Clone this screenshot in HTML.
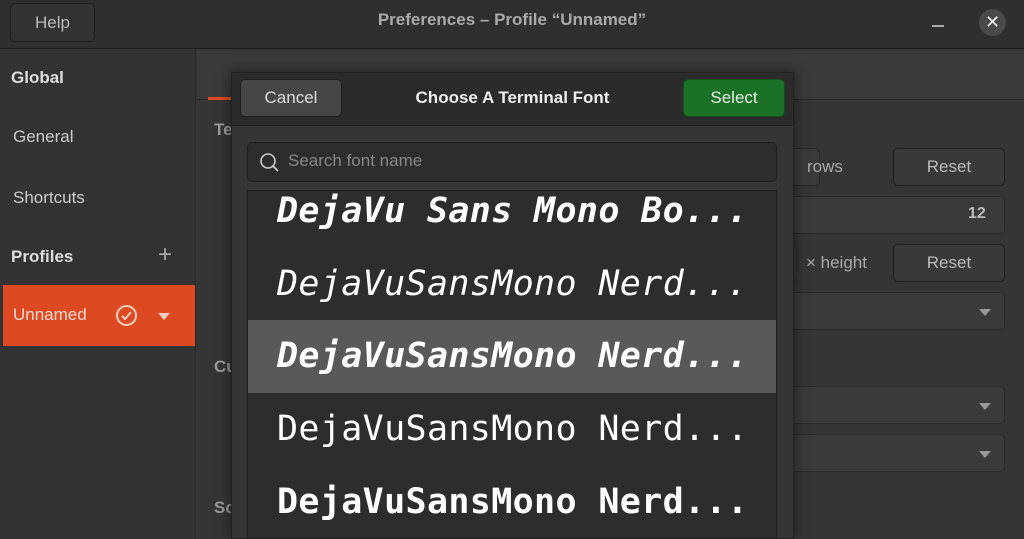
<!DOCTYPE html>
<html><head><meta charset="utf-8"><style>
*{box-sizing:border-box;margin:0;padding:0}
body{width:1024px;height:539px;overflow:hidden;background:#353535;font-family:"Liberation Sans","DejaVu Sans",sans-serif;color:#ddd;position:relative}
.abs{position:absolute}
.title{left:0;top:0;width:1024px;height:49px;background:#2f2f2f;border-bottom:1px solid #1e1e1e}
.btn{border:1px solid #1f1f1f;border-radius:5px;background:#393939;color:#bbb;font-size:17px;display:flex;align-items:center;justify-content:center}
.side{left:0;top:50px;width:196px;height:489px;background:#333;border-right:1px solid #2a2a2a}
.field{background:#3a3a3a;border:1px solid #2a2a2a;border-radius:5px}
.tri{width:0;height:0;border-left:6px solid transparent;border-right:6px solid transparent;border-top:7px solid #999}
.row{left:248px;width:528px;height:73px;font-family:"DejaVu Sans Mono",monospace;font-size:35px;letter-spacing:0.35px;color:#fff;padding-left:29px;line-height:73px;white-space:nowrap;overflow:hidden}
</style></head><body>
<div class="abs title"></div>
<div class="abs btn" style="left:10px;top:3px;width:85px;height:39px;background:#333">Help</div>
<div class="abs" style="left:0;width:1024px;top:10px;text-align:center;font-weight:bold;font-size:17px;color:#aaa">Preferences – Profile “Unnamed”</div>
<div class="abs" style="left:932px;top:25px;width:12px;height:2px;background:#aaa"></div>
<div class="abs" style="left:979px;top:9px;width:27px;height:27px;border-radius:50%;background:#4a4a4a;color:#eee;font-size:18px;text-align:center;line-height:27px">✕</div>
<div class="abs side"></div>
<div class="abs" style="left:11px;top:68px;font-weight:bold;font-size:17px;color:#ddd">Global</div>
<div class="abs" style="left:13px;top:127px;font-size:17px;color:#ccc">General</div>
<div class="abs" style="left:13px;top:188px;font-size:17px;color:#ccc">Shortcuts</div>
<div class="abs" style="left:11px;top:247px;font-weight:bold;font-size:17px;color:#ddd">Profiles</div>
<div class="abs" style="left:158px;top:241px;font-size:24px;color:#aaa">+</div>
<div class="abs" style="left:3px;top:285px;width:192px;height:61px;background:#dd4a22"></div>
<div class="abs" style="left:13px;top:305px;font-size:17px;color:#f2d8cf">Unnamed</div>
<div class="abs" style="left:116px;top:305px;width:21px;height:21px;border:2px solid #f0cdbf;border-radius:50%"></div>
<svg class="abs" style="left:116px;top:305px" width="21" height="21"><path d="M6 11l3 3 6-7" stroke="#f0cdbf" stroke-width="2" fill="none"/></svg>
<div class="abs tri" style="left:158px;top:313px;border-top-color:#f0cdbf"></div>
<div class="abs" style="left:197px;top:50px;width:827px;height:50px;background:#3a3a3a;border-bottom:1px solid #2a2a2a"></div>
<div class="abs" style="left:208px;top:97px;width:30px;height:3px;background:#dd4a22"></div>
<div class="abs" style="left:214px;top:120px;font-weight:bold;font-size:17px;color:#999">Te</div>
<div class="abs" style="left:214px;top:357px;font-weight:bold;font-size:17px;color:#999">Cu</div>
<div class="abs" style="left:214px;top:498px;font-weight:bold;font-size:17px;color:#999">Sc</div>
<div class="abs field" style="left:760px;top:148px;width:60px;height:38px"></div>
<div class="abs" style="left:807px;top:157px;font-size:17px;color:#aaa">rows</div>
<div class="abs btn" style="left:893px;top:148px;width:112px;height:38px">Reset</div>
<div class="abs field" style="left:760px;top:196px;width:245px;height:38px"></div>
<div class="abs" style="left:968px;top:205px;font-size:16px;font-weight:bold;color:#bbb">12</div>
<div class="abs field" style="left:760px;top:244px;width:37px;height:38px"></div>
<div class="abs" style="left:806px;top:253px;font-size:17px;color:#aaa">× height</div>
<div class="abs btn" style="left:893px;top:244px;width:112px;height:38px">Reset</div>
<div class="abs field" style="left:760px;top:292px;width:245px;height:38px"></div><div class="abs tri" style="left:979px;top:309px"></div>
<div class="abs field" style="left:760px;top:386px;width:245px;height:38px"></div><div class="abs tri" style="left:979px;top:403px"></div>
<div class="abs field" style="left:760px;top:434px;width:245px;height:38px"></div><div class="abs tri" style="left:979px;top:451px"></div>
<div class="abs" style="left:231px;top:72px;width:563px;height:467px;background:#353535;box-shadow:0 0 12px rgba(0,0,0,.5);border:1px solid #222"></div>
<div class="abs" style="left:232px;top:73px;width:561px;height:53px;background:#2b2b2b;border-bottom:1px solid #222"></div>
<div class="abs btn" style="left:240px;top:79px;width:102px;height:38px;background:#464646;color:#ddd">Cancel</div>
<div class="abs" style="left:232px;width:561px;top:88px;text-align:center;font-weight:bold;font-size:17px;color:#eee">Choose A Terminal Font</div>
<div class="abs btn" style="left:683px;top:79px;width:102px;height:38px;background:#1a7226;color:#e8f0e8;border-color:#124e1a">Select</div>
<div class="abs" style="left:247px;top:142px;width:530px;height:40px;background:#2d2d2d;border:1px solid #1f1f1f;border-radius:5px"></div>
<svg class="abs" style="left:258px;top:151px" width="22" height="22"><circle cx="10" cy="10" r="7" stroke="#ccc" stroke-width="1.6" fill="none"/><path d="M15 15l5 5" stroke="#ccc" stroke-width="1.8"/></svg>
<div class="abs" style="left:288px;top:151px;font-size:17px;color:#888">Search font name</div>
<div class="abs" style="left:247px;top:190px;width:530px;height:349px;background:#2d2d2d;border:1px solid #1f1f1f;overflow:hidden">
<div class="abs row" style="left:0;top:-16px;font-weight:bold;font-style:italic">DejaVu Sans Mono Bo...</div>
<div class="abs row" style="left:0;top:57px;font-style:italic">DejaVuSansMono Nerd...</div>
<div class="abs row" style="left:0;top:129px;font-weight:bold;font-style:italic;background:#595959">DejaVuSansMono Nerd...</div>
<div class="abs row" style="left:0;top:202px">DejaVuSansMono Nerd...</div>
<div class="abs row" style="left:0;top:275px;font-weight:bold">DejaVuSansMono Nerd...</div>
</div>
</body></html>
